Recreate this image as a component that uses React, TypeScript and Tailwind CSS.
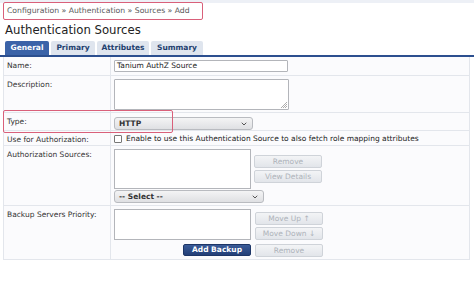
import { ChevronDown } from 'lucide-react';

function Select({ value, w }: { value: string; w: string }) {
    return (
        <div className={`${w} h-[13px] flex items-center justify-between rounded-[3px] border border-[#b9bbc0] bg-[linear-gradient(#f4f4f5,#dfe0e3)] pl-[4px] pr-[4px]`}>
            <span className="text-[7.5px] font-bold text-[#333] leading-none">{value}</span>
            <ChevronDown size={8} strokeWidth={3} className="text-[#555]" />
        </div>
    );
}

function Btn({ label }: { label: string }) {
    return (
        <div className="w-[68px] h-[13px] flex items-center justify-center rounded-[2px] border border-[#cfd3d9] bg-[linear-gradient(#f3f4f6,#e2e5ea)] text-[7.5px] text-[#aeb3ba] leading-none">
            {label}
        </div>
    );
}

function Row({ label, h, children, last }: { label: string; h: string; children: React.ReactNode; last?: boolean }) {
    return (
        <div className={`flex ${h} ${last ? '' : 'border-b'} border-[#e3e6ec]`}>
            <div className="w-[107px] shrink-0 border-r border-[#e3e6ec] pl-[3px] text-[7.5px] text-[#333] leading-none pt-[5px]">
                {label}
            </div>
            <div className="grow pl-[3px] pt-[3px]">{children}</div>
        </div>
    );
}

export default function App() {
    return (
        <div className="relative w-[474px] h-[284px] overflow-hidden bg-[linear-gradient(#edf0f6_0,#edf0f6_3px,#ffffff_3px)] font-['DejaVu_Sans',sans-serif]">
            <div className="pt-[2px] pl-[3px]">
                <div className="w-[200px] h-[18px] flex items-center border border-[#d9607a] rounded-[2px] bg-white pl-[3px] text-[7.7px] text-[#5a5a5a] leading-none">
                    Configuration » Authentication » Sources » Add
                </div>
            </div>
            <div className="pl-[5px] pt-[5px] h-[21px] text-[11.7px] text-[#222] leading-none">
                Authentication Sources
            </div>
            <div className="flex gap-[2px] pl-[5px] h-[14px]">
                <div className="w-[44px] flex items-center justify-center bg-[#3b63a8] text-white text-[7.5px] font-bold rounded-t-[2px]">General</div>
                <div className="w-[44px] flex items-center justify-center bg-[#dfe5ee] text-[#233f6e] text-[7.5px] font-bold rounded-t-[2px]">Primary</div>
                <div className="w-[52px] flex items-center justify-center bg-[#dfe5ee] text-[#233f6e] text-[7.5px] font-bold rounded-t-[2px]">Attributes</div>
                <div className="w-[52px] flex items-center justify-center bg-[#dfe5ee] text-[#233f6e] text-[7.5px] font-bold rounded-t-[2px]">Summary</div>
            </div>
            <div className="h-[2px] bg-[#2c4f8f]" />
            <div className="mx-[3px] mr-[4px] border-x border-b border-[#e3e6ec] bg-[#fbfbfd]">
                <Row label="Name:" h="h-[19px]">
                    <div className="w-[174px] h-[12px] border border-[#b3b5ba] bg-white rounded-[1px] pl-[2px] text-[7.5px] text-[#222] leading-[10px]">
                        Tanium AuthZ Source
                    </div>
                </Row>
                <Row label="Description:" h="h-[37px]">
                    <div className="relative w-[175px] h-[31px] border border-[#b3b5ba] bg-white rounded-[1px]">
                        <svg width="6" height="6" className="absolute right-[1px] bottom-[1px]" viewBox="0 0 6 6">
                            <path d="M6 0 L0 6 M6 2 L2 6 M6 4 L4 6" stroke="#999" strokeWidth="0.8" />
                        </svg>
                    </div>
                </Row>
                <Row label="Type:" h="h-[18px]">
                    <div className="pt-[1px]"><Select value="HTTP" w="w-[139px]" /></div>
                </Row>
                <Row label="Use for Authorization:" h="h-[15px]">
                    <div className="flex items-center gap-[4px] pt-[1px]">
                        <div className="w-[8px] h-[8px] border border-[#777] rounded-[1px] bg-white" />
                        <span className="text-[7.5px] text-[#222] leading-none">
                            Enable to use this Authentication Source to also fetch role mapping attributes
                        </span>
                    </div>
                </Row>
                <Row label="Authorization Sources:" h="h-[60px]">
                    <div className="flex gap-[3px]">
                        <div className="w-[137px] h-[40px] border border-[#b3b5ba] bg-white" />
                        <div className="flex flex-col gap-[2px] pt-[6px]">
                            <Btn label="Remove" />
                            <Btn label="View Details" />
                        </div>
                    </div>
                    <div className="pt-[1px]"><Select value="-- Select --" w="w-[150px]" /></div>
                </Row>
                <Row label="Backup Servers Priority:" h="h-[53px]" last>
                    <div className="flex gap-[4px]">
                        <div className="flex flex-col items-end gap-[4px]">
                            <div className="w-[137px] h-[31px] border border-[#b3b5ba] bg-white" />
                            <div className="w-[68px] h-[12px] flex items-center justify-center rounded-[2px] border border-[#1d3566] bg-[linear-gradient(#3a5b98,#233f77)] text-white text-[7.5px] font-bold leading-none">
                                Add Backup
                            </div>
                        </div>
                        <div className="flex flex-col gap-[2px] pt-[3px]">
                            <Btn label="Move Up ↑" />
                            <Btn label="Move Down ↓" />
                            <div className="pt-[2px]"><Btn label="Remove" /></div>
                        </div>
                    </div>
                </Row>
            </div>
            <div className="absolute left-[3px] top-[110px] w-[170px] h-[23px] border border-[#d9607a] rounded-[2px]" />
        </div>
    );
}
